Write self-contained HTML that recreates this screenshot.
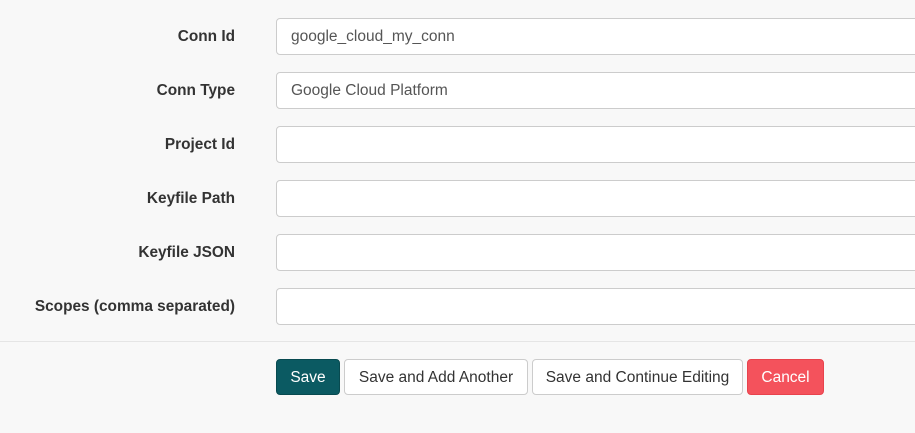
<!DOCTYPE html>
<html><head><style>
body{margin:0;background:#f8f8f8;font-family:"Liberation Sans",sans-serif;width:915px;height:433px;overflow:hidden;position:relative}
.l{position:absolute;right:680px;font-weight:bold;font-size:15.4px;color:#333;line-height:20px}
.i{position:absolute;left:276px;width:660px;height:35px;background:#fff;border:1px solid #ccc;border-radius:4px;box-sizing:content-box;font-size:15.5px;color:#555;line-height:35px;text-indent:14px}
.hr{position:absolute;left:0;right:0;top:341px;border-top:1px solid #e5e5e5}
.b{position:absolute;top:359px;height:34px;border:1px solid #ccc;border-radius:4px;background:#fff;color:#333;font-size:15.5px;line-height:36px;text-align:center}
</style></head><body>
<div class="l" style="top:27px">Conn Id</div><div class="i" style="top:18px">google_cloud_my_conn</div>
<div class="l" style="top:81px">Conn Type</div><div class="i" style="top:72px">Google Cloud Platform</div>
<div class="l" style="top:135px">Project Id</div><div class="i" style="top:126px"></div>
<div class="l" style="top:189px">Keyfile Path</div><div class="i" style="top:180px"></div>
<div class="l" style="top:243px">Keyfile JSON</div><div class="i" style="top:234px"></div>
<div class="l" style="top:297px">Scopes (comma separated)</div><div class="i" style="top:288px"></div>
<div class="hr"></div>
<div class="b" style="left:276px;width:62px;background:#0b5a62;border-color:#084a50;color:#fff">Save</div>
<div class="b" style="left:344px;width:182px">Save and Add Another</div>
<div class="b" style="left:532px;width:209px">Save and Continue Editing</div>
<div class="b" style="left:747px;width:75px;background:#f4525c;border-color:#e8434d;color:#fff">Cancel</div>
</body></html>
